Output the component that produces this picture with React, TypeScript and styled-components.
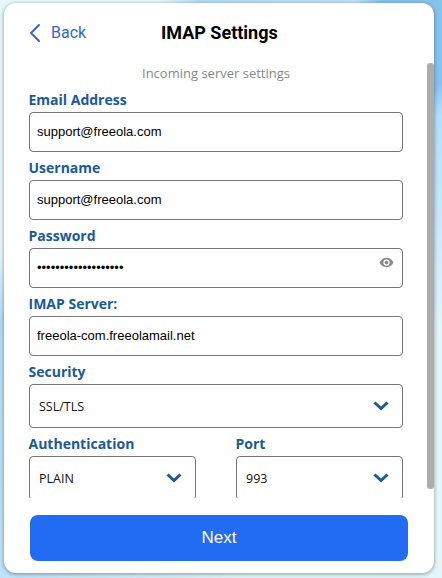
import React from 'react';
import styled, { createGlobalStyle } from 'styled-components';
import { ChevronLeft } from 'lucide-react';

const GlobalStyle = createGlobalStyle`
  html, body {
    margin: 0;
    height: 100%;
  }
  * {
    box-sizing: border-box;
  }
`;

const Page = styled.div`
  width: 442px;
  height: 578px;
  padding: 3px 8px 5px 4px;
  overflow: hidden;
  background:
    radial-gradient(ellipse 70px 85px at 418px 35px, #86c2ee 65%, rgba(134, 194, 238, 0) 100%),
    linear-gradient(180deg, rgba(176, 222, 250, 0) 0, rgba(176, 222, 250, 0.9) 120px, rgba(176, 222, 250, 0) 340px) right / 60px 100% no-repeat,
    linear-gradient(122deg, #e6f7fc 0, #e6f7fc 20%, #b5dcf8 25%, #bfe3f9 45%, #e4f6fa 75%);
`;

const Card = styled.main`
  position: relative;
  display: flex;
  flex-direction: column;
  width: 430px;
  height: 570px;
  overflow: hidden;
  background: #fff;
  border-radius: 12px;
  box-shadow: 0 1px 4px rgba(0, 0, 0, 0.4);
`;

const Header = styled.header`
  position: relative;
  display: flex;
  flex: none;
  align-items: center;
  height: 60px;
  padding: 0 0 1px 15px;
`;

const BackLink = styled.a`
  display: flex;
  align-items: center;
  color: #3866c4;
  font: 400 16px Roboto, sans-serif;
`;

const Title = styled.h1`
  position: absolute;
  left: 157px;
  margin: 0;
  color: #000;
  font: 700 18px Roboto, sans-serif;
`;

const Scroller = styled.div`
  flex: none;
  height: 435px;
  padding: 0 31px 0 25px;
  overflow: hidden;
`;

const ScrollThumb = styled.div`
  position: absolute;
  top: 60px;
  right: 0;
  width: 7px;
  height: 426px;
  background: #adadad;
  border-radius: 3px;
`;

const Subtitle = styled.p`
  margin: 0;
  padding-top: 1px;
  height: 21px;
  color: #888;
  font: 400 13px "Open Sans", sans-serif;
  line-height: 18px;
  text-align: center;
`;

const Field = styled.div`
  display: flex;
  flex-direction: column;
  min-width: 0;
`;

const Label = styled.label`
  display: block;
  height: 28px;
  margin-left: -0.5px;
  padding-top: 7px;
  color: #1b5a96;
  font: 700 14px "Open Sans", sans-serif;
  line-height: 18px;
  white-space: nowrap;
`;

const InputWrap = styled.div`
  position: relative;
  height: 40px;
`;

const TextInput = styled.input`
  display: block;
  width: 100%;
  height: 100%;
  padding: 0 7px 2px;
  color: #000;
  font: 400 13px "Liberation Sans", Arial, sans-serif;
  background: #fff;
  border: 1px solid #767676;
  border-radius: 4px;
  outline: none;
`;

const EyeIcon = styled.svg`
  position: absolute;
  top: 7px;
  right: 9px;
  width: 15px;
  height: 15px;
  fill: #8c8c8c;
`;

const Select = styled.div`
  display: flex;
  align-items: center;
  justify-content: space-between;
  height: 44px;
  padding: 0 13px 0 9px;
  color: #111;
  font: 400 12.5px "Open Sans", sans-serif;
  border: 1px solid #767676;
  border-radius: 4px;
`;

const Chevron = styled.svg`
  flex: none;
  width: 16px;
  height: 10px;
  fill: none;
  stroke: #1b5a96;
  stroke-width: 3;
`;

const Columns = styled.div`
  display: grid;
  grid-template-columns: 167px 167px;
  justify-content: space-between;
`;

const Footer = styled.footer`
  flex: none;
  padding: 17px 26px 0;
`;

const NextButton = styled.button`
  display: block;
  width: 378px;
  height: 46px;
  color: #fff;
  font: 400 17px "Liberation Sans", Arial, sans-serif;
  background: #216cf3;
  border: 0;
  border-radius: 8px;
`;

const ChevronDown = () => (
  <Chevron viewBox="0 0 16 10">
    <path d="M1.5 1.5 8 7.5l6.5-6" />
  </Chevron>
);

const App: React.FC = () => {
  return (
    <>
      <GlobalStyle />
      <Page>
        <Card>
          <Header>
            <BackLink>
              <ChevronLeft size={32} strokeWidth={1.5} />
              Back
            </BackLink>
            <Title>IMAP Settings</Title>
          </Header>
          <Scroller>
            <Subtitle>Incoming server settings</Subtitle>
            <Field>
              <Label>Email Address</Label>
              <InputWrap>
                <TextInput type="text" value="support@freeola.com" readOnly />
              </InputWrap>
            </Field>
            <Field>
              <Label>Username</Label>
              <InputWrap>
                <TextInput type="text" value="support@freeola.com" readOnly />
              </InputWrap>
            </Field>
            <Field>
              <Label>Password</Label>
              <InputWrap>
                <TextInput type="password" value="support@freeola.com" readOnly />
                <EyeIcon viewBox="0 0 24 24">
                  <path d="M12 4.5C7 4.5 2.7 7.6 1 12c1.7 4.4 6 7.5 11 7.5s9.3-3.1 11-7.5c-1.7-4.4-6-7.5-11-7.5zm0 12.5a5 5 0 1 1 0-10 5 5 0 0 1 0 10zm0-8a3 3 0 1 0 0 6 3 3 0 0 0 0-6z" />
                </EyeIcon>
              </InputWrap>
            </Field>
            <Field>
              <Label>IMAP Server:</Label>
              <InputWrap>
                <TextInput type="text" value="freeola-com.freeolamail.net" readOnly />
              </InputWrap>
            </Field>
            <Field>
              <Label>Security</Label>
              <Select>
                SSL/TLS
                <ChevronDown />
              </Select>
            </Field>
            <Columns>
              <Field>
                <Label>Authentication</Label>
                <Select>
                  PLAIN
                  <ChevronDown />
                </Select>
              </Field>
              <Field>
                <Label>Port</Label>
                <Select>
                  993
                  <ChevronDown />
                </Select>
              </Field>
            </Columns>
          </Scroller>
          <ScrollThumb />
          <Footer>
            <NextButton type="button">Next</NextButton>
          </Footer>
        </Card>
      </Page>
    </>
  );
};

export default App;
